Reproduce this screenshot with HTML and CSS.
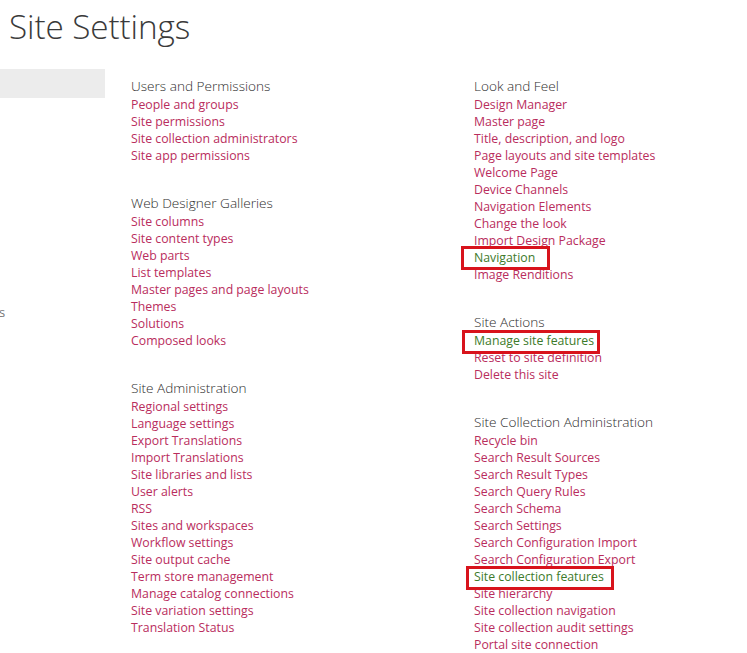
FILE: index.html
```html
<!DOCTYPE html>
<html>
<head>
<meta charset="utf-8">
<link rel="stylesheet" href="styles.css">
</head>
<body>
<h1 class="title">Site Settings</h1>
<div class="page">
  <div class="leftnav">
    <div class="nav-box"></div>
    <div class="nav-frag">s</div>
  </div>
  <div class="columns">
    <div class="col">
      <div class="section">
        <div class="heading">Users and Permissions</div>
        <a class="link">People and groups</a>
        <a class="link">Site permissions</a>
        <a class="link">Site collection administrators</a>
        <a class="link">Site app permissions</a>
      </div>
      <div class="section">
        <div class="heading">Web Designer Galleries</div>
        <a class="link">Site columns</a>
        <a class="link">Site content types</a>
        <a class="link">Web parts</a>
        <a class="link">List templates</a>
        <a class="link">Master pages and page layouts</a>
        <a class="link">Themes</a>
        <a class="link">Solutions</a>
        <a class="link">Composed looks</a>
      </div>
      <div class="section">
        <div class="heading">Site Administration</div>
        <a class="link">Regional settings</a>
        <a class="link">Language settings</a>
        <a class="link">Export Translations</a>
        <a class="link">Import Translations</a>
        <a class="link">Site libraries and lists</a>
        <a class="link">User alerts</a>
        <a class="link">RSS</a>
        <a class="link">Sites and workspaces</a>
        <a class="link">Workflow settings</a>
        <a class="link">Site output cache</a>
        <a class="link">Term store management</a>
        <a class="link">Manage catalog connections</a>
        <a class="link">Site variation settings</a>
        <a class="link">Translation Status</a>
      </div>
    </div>
    <div class="col">
      <div class="section">
        <div class="heading">Look and Feel</div>
        <a class="link">Design Manager</a>
        <a class="link">Master page</a>
        <a class="link">Title, description, and logo</a>
        <a class="link">Page layouts and site templates</a>
        <a class="link">Welcome Page</a>
        <a class="link">Device Channels</a>
        <a class="link">Navigation Elements</a>
        <a class="link">Change the look</a>
        <a class="link">Import Design Package</a>
        <a class="link hl">Navigation</a>
        <a class="link">Image Renditions</a>
      </div>
      <div class="section">
        <div class="heading">Site Actions</div>
        <a class="link hl">Manage site features</a>
        <a class="link">Reset to site definition</a>
        <a class="link">Delete this site</a>
      </div>
      <div class="section">
        <div class="heading">Site Collection Administration</div>
        <a class="link">Recycle bin</a>
        <a class="link">Search Result Sources</a>
        <a class="link">Search Result Types</a>
        <a class="link">Search Query Rules</a>
        <a class="link">Search Schema</a>
        <a class="link">Search Settings</a>
        <a class="link">Search Configuration Import</a>
        <a class="link">Search Configuration Export</a>
        <a class="link hl">Site collection features</a>
        <a class="link">Site hierarchy</a>
        <a class="link">Site collection navigation</a>
        <a class="link">Site collection audit settings</a>
        <a class="link">Portal site connection</a>
      </div>
    </div>
  </div>
  <div class="mark mark-nav"></div>
  <div class="mark mark-features"></div>
  <div class="mark mark-sc"></div>
</div>
</body>
</html>
```

FILE: styles.css
```css
html, body {
  margin: 0;
  padding: 0;
  background: #ffffff;
}
body {
  font-family: "Open Sans", "Noto Sans", sans-serif;
  width: 747px;
  height: 653px;
  overflow: hidden;
}
.title {
  margin: 0;
  padding: 4px 0 0 9px;
  height: 64px;
  box-sizing: border-box;
  font-size: 33.3px;
  font-weight: 300;
  color: #3a3a3a;
  line-height: 44px;
  letter-spacing: -0.1px;
}
.page {
  position: relative;
  display: flex;
  padding-top: 5px;
}
.leftnav {
  width: 105px;
  flex: none;
}
.nav-box {
  height: 29px;
  background: #ececec;
}
.nav-frag {
  margin-top: 206px;
  margin-left: -1px;
  font-size: 13px;
  color: #777777;
  line-height: 17px;
}
.columns {
  display: flex;
  padding-left: 26px;
  padding-top: 9px;
}
.col {
  width: 343px;
  display: flex;
  flex-direction: column;
}
.section {
  display: flex;
  flex-direction: column;
  margin-bottom: 31px;
}
.heading {
  font-size: 13.6px;
  font-weight: 300;
  color: #2e2e2e;
  line-height: 16px;
  height: 18px;
}
.link {
  font-size: 12.3px;
  line-height: 17px;
  height: 17px;
  color: #b92d5d;
  white-space: nowrap;
}
.link.hl {
  color: #3d7a2a;
}
.mark {
  position: absolute;
  border: 3px solid #d8131c;
  box-sizing: border-box;
}
.mark-nav {
  left: 461px;
  top: 182px;
  width: 89px;
  height: 24px;
}
.mark-features {
  left: 462px;
  top: 266px;
  width: 138px;
  height: 24px;
}
.mark-sc {
  left: 466px;
  top: 502px;
  width: 148px;
  height: 24px;
}
```
